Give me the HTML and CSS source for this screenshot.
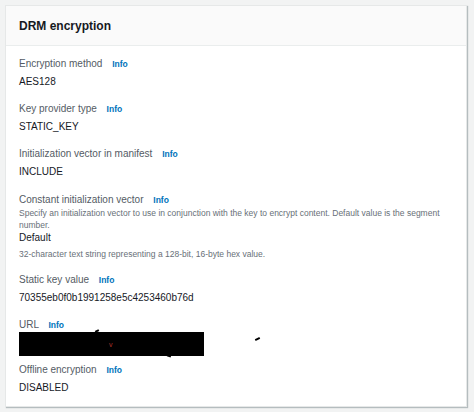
FILE: index.html
```html
<!DOCTYPE html>
<html>
<head>
<meta charset="utf-8">
<link rel="stylesheet" href="styles.css">
</head>
<body>
<div class="card">
  <div class="card-header"><h2 class="title">DRM encryption</h2></div>
  <div class="card-body">
    <div class="field">
      <div class="label">Encryption method <a class="info">Info</a></div>
      <div class="value">AES128</div>
    </div>
    <div class="field">
      <div class="label">Key provider type <a class="info">Info</a></div>
      <div class="value">STATIC_KEY</div>
    </div>
    <div class="field">
      <div class="label">Initialization vector in manifest <a class="info">Info</a></div>
      <div class="value">INCLUDE</div>
    </div>
    <div class="field field-shift">
      <div class="label">Constant initialization vector <a class="info">Info</a></div>
      <div class="desc">Specify an initialization vector to use in conjunction with the key to encrypt content. Default value is the segment number.</div>
      <div class="value tight">Default</div>
      <div class="constraint">32-character text string representing a 128-bit, 16-byte hex value.</div>
    </div>
    <div class="field">
      <div class="label">Static key value <a class="info">Info</a></div>
      <div class="value">70355eb0f0b1991258e5c4253460b76d</div>
    </div>
    <div class="field url-field">
      <div class="label">URL <a class="info">Info</a></div>
      <div class="redact"><span class="redact-mark">v</span></div>
      <span class="tick tick-a"></span>
      <span class="tick tick-b"></span>
      <span class="tick tick-c"></span>
    </div>
    <div class="field">
      <div class="label">Offline encryption <a class="info">Info</a></div>
      <div class="value">DISABLED</div>
    </div>
  </div>
</div>
</body>
</html>
```
FILE: styles.css
```css
html, body {
  margin: 0;
  padding: 0;
}
body {
  background: #f2f3f3;
  font-family: "Liberation Sans", Arial, sans-serif;
  width: 474px;
  height: 412px;
  overflow: hidden;
}
.card {
  margin: 5px 0 0 5px;
  width: 462px;
  height: 402px;
  box-sizing: border-box;
  background: #ffffff;
  border: 1px solid #e6e8e8;
  box-shadow: 1px 1px 1px rgba(0, 28, 36, 0.25);
}
.card-header {
  height: 40px;
  box-sizing: border-box;
  background: #fafafa;
  border-bottom: 1px solid #eaeded;
  padding: 0 13px;
  display: flex;
  align-items: center;
}
.title {
  margin: 0;
  font-size: 12px;
  font-weight: 700;
  color: #16191f;
  line-height: 16px;
}
.card-body {
  padding: 11px 13px 0;
}
.field {
  margin-bottom: 13px;
}
.field-shift {
  padding-top: 1px;
}
.label {
  font-size: 10px;
  line-height: 14px;
  color: #545b64;
}
.info {
  margin-left: 7px;
  font-size: 8.5px;
  font-weight: 700;
  color: #0073bb;
}
.value {
  margin-top: 4px;
  font-size: 10px;
  line-height: 14px;
  color: #16191f;
}
.value.tight {
  margin-top: 0;
}
.desc {
  max-width: 430px;
  font-size: 8.5px;
  line-height: 12px;
  color: #687078;
}
.constraint {
  margin-top: 3px;
  font-size: 8.5px;
  line-height: 12px;
  color: #687078;
}
.url-field {
  position: relative;
  margin-bottom: 7px;
}
.redact {
  width: 185px;
  height: 24px;
  background: #000000;
  display: flex;
  align-items: center;
  justify-content: flex-start;
}
.redact-mark {
  margin-left: 90px;
  font-size: 7px;
  line-height: 7px;
  color: #b0352c;
}
.tick {
  position: absolute;
  background: #000000;
  height: 2px;
  transform: rotate(-25deg);
}
.tick-a {
  left: 76px;
  top: 12px;
  width: 4px;
}
.tick-b {
  left: 148px;
  top: 37px;
  width: 4px;
  transform: rotate(20deg);
}
.tick-c {
  left: 236px;
  top: 20px;
  width: 5px;
}
```
